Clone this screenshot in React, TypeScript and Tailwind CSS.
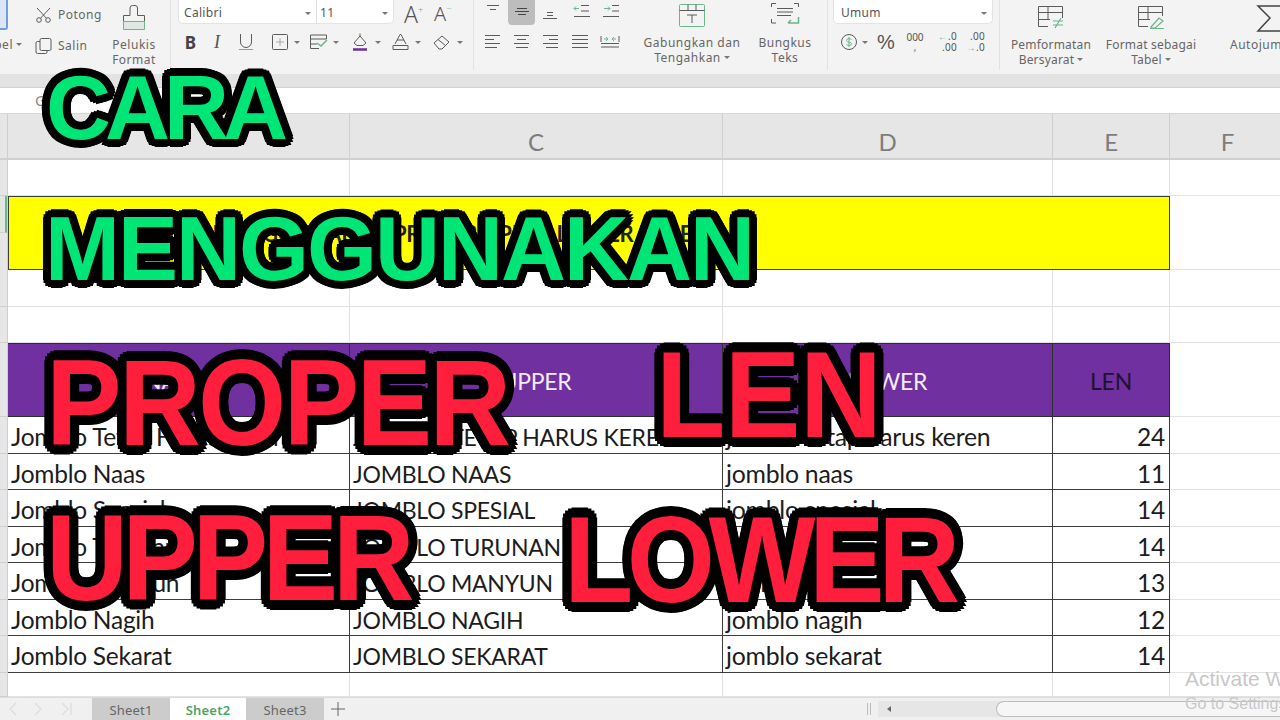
import React from "react";

const S = "#5b5b5b";
const G = "#6db58a";

function Caret() {
  return <span className="inline-block w-0 h-0 shrink-0 border-l-[3px] border-r-[3px] border-t-[3px] border-l-transparent border-r-transparent border-t-[#777777]" />;
}

function Ico({ w = 18, h = 18, children, className = "" }: { w?: number; h?: number; children: React.ReactNode; className?: string }) {
  return (
    <svg width={w} height={h} viewBox={`0 0 ${w} ${h}`} fill="none" stroke={S} strokeWidth={1} className={className}>
      {children}
    </svg>
  );
}

function Lines({ rows }: { rows: [number, number][] }) {
  return (
    <Ico w={18} h={16}>
      {rows.map(([a, b], i) => (
        <path key={i} d={`M${a} ${2.5 + i * 4}H${b}`} />
      ))}
    </Ico>
  );
}

function Label({ a, b, caret, tight }: { a: string; b?: string; caret?: boolean; tight?: boolean }) {
  return (
    <div className={`text-[12px] leading-[15px] ${tight ? "tracking-[0.2px]" : "tracking-[0.5px]"} text-[#666666] text-center whitespace-nowrap`}>
      <div>{a}</div>
      {b && (
        <div className="flex items-center justify-center gap-[3px]">
          {b}
          {caret && <Caret />}
        </div>
      )}
    </div>
  );
}

function Sep() {
  return <div className="w-px h-[70px] bg-[#e2e2e2] shrink-0" />;
}

function LargeTool({ w, t = "h-[37px]", icon, a, b, caret, tight }: { w: string; t?: string; icon: React.ReactNode; a: string; b?: string; caret?: boolean; tight?: boolean }) {
  return (
    <div className={`${w} shrink-0 flex flex-col items-center`}>
      <div className={`${t} flex items-start pt-[1px]`}>{icon}</div>
      <Label a={a} b={b} caret={caret} tight={tight} />
    </div>
  );
}

function Ribbon() {
  return (
    <div className="h-[74px] bg-[#f3f3f3] flex shrink-0 overflow-hidden">
      {/* clipboard */}
      <div className="w-[170px] shrink-0 flex">
        <div className="w-[34px] shrink-0 flex flex-col">
          <div className="h-[30px] overflow-hidden">
            <div className="w-[8px] h-[30px] rounded-br-[3px] border-r-2 border-b-2 border-[#6f9fe0] bg-[#dbe7f8]" />
          </div>
          <div className="w-[22px] overflow-hidden flex justify-end items-center gap-[3px] mt-[7px] text-[12px] leading-[15px] tracking-[0.5px] text-[#666666] whitespace-nowrap">
            Tempel
            <Caret />
          </div>
        </div>
        <div className="w-[72px] shrink-0 flex flex-col pt-[6px] gap-[11px] text-[12px] tracking-[0.5px] text-[#666666]">
          <div className="flex items-center gap-[6px] h-[18px]">
            <Ico>
              <circle cx="5" cy="14" r="2.3" />
              <circle cx="14" cy="14" r="2.3" />
              <path d="M6.500 12.300 16 2M12.500 12.300 3 2" />
            </Ico>
            Potong
          </div>
          <div className="flex items-center gap-[6px] h-[18px] mt-[2px]">
            <Ico>
              <rect x="6" y="1.500" width="11" height="12" rx="1.500" />
              <path d="M6 4.500H3.500A1.500 1.500 0 0 0 2 6V15A1.500 1.500 0 0 0 3.500 16.500H11.500A1.500 1.500 0 0 0 13 15V13.500" />
            </Ico>
            Salin
          </div>
        </div>
        <LargeTool
          w="w-[56px]"
          a="Pelukis"
          b="Format"
          icon={
            <Ico w={24} h={30} className="mt-[1px]">
              <path d="M1.500 19.500V13.500H8V6A2.500 2.500 0 0 1 10.500 3.500H13A2.500 2.500 0 0 1 15.500 6V13.500H22.500V19.500Z" />
              <path d="M1.500 19.500H22.500V27.500H1.500Z" fill="#dfe9e3" stroke={G} />
            </Ico>
          }
        />
      </div>
      <Sep />
      {/* font */}
      <div className="w-[302px] shrink-0 flex flex-col pl-[7px]">
        <div className="h-[24px] flex items-center">
          <div className="w-[216px] h-[24px] bg-white rounded-b-[5px] border-b border-x border-[#e3e3e3] flex items-center text-[12px] tracking-[0.3px] text-[#555555]">
            <div className="w-[138px] h-full flex items-center justify-between pt-[3px] pl-[5px] pr-[5px] border-r border-[#dddddd]">
              Calibri
              <Caret />
            </div>
            <div className="flex-1 h-full flex items-center justify-between pt-[3px] pl-[3px] pr-[5px]">
              11
              <Caret />
            </div>
          </div>
          <div className="ml-[10px] w-[30px] pt-[3px] text-[23px] leading-[24px] text-[#555555] font-light whitespace-nowrap">
            A<span className="text-[9px] leading-none text-[#6db58a] align-[10px]">+</span>
          </div>
          <div className="pt-[3px] text-[20px] leading-[24px] text-[#555555] font-light whitespace-nowrap">
            A<span className="text-[9px] leading-none text-[#6db58a] align-[9px]">−</span>
          </div>
        </div>
        <div className="h-[36px] flex items-center text-[#444444]">
          <span className="w-[25px] font-bold text-[17px] leading-none text-center">B</span>
          <span className="w-[28px] text-[18px] leading-none text-center italic font-['Liberation_Serif',serif] text-[#555555]">I</span>
          <div className="w-[30px] flex justify-center">
            <Ico w={16} h={18}>
              <path d="M2.500 1V9A5.500 5.500 0 0 0 13.500 9V1" />
              <path d="M1 16.500H15" stroke={G} />
            </Ico>
          </div>
          <div className="w-[39px] flex items-center gap-[5px] justify-end">
            <Ico w={18} h={18}>
              <rect x="1.500" y="1.500" width="15" height="15" rx="1" />
              <path d="M9 5V13M5 9H13" stroke="#a8a8a8" />
            </Ico>
            <Caret />
          </div>
          <div className="w-[39px] flex items-center gap-[5px] justify-end">
            <Ico w={19} h={18}>
              <path d="M1.500 2H17.500V6H1.500ZM1.500 6V15.500H10M1.500 11H8" />
              <path d="M8 10 12 13 18 7" stroke={G} strokeWidth={1.500} />
            </Ico>
            <Caret />
          </div>
          <div className="w-[42px] flex items-center gap-[5px] justify-end">
            <Ico w={19} h={20}>
              <path d="M3 11 9 4 15 11 12 13.500H6Z" />
              <path d="M9 1.500V4" />
              <path d="M2 17.500H16" stroke="#6b2fa5" strokeWidth={2.500} />
            </Ico>
            <Caret />
          </div>
          <div className="w-[40px] flex items-center gap-[5px] justify-end">
            <Ico w={19} h={20}>
              <path d="M4 12 9 2.500H10L15 12" />
              <path d="M6 8H13" />
              <path d="M2 13.500H17V17.500H2Z" />
            </Ico>
            <Caret />
          </div>
          <div className="w-[42px] flex items-center gap-[5px] justify-end">
            <Ico w={20} h={18}>
              <path d="M2 10 10 3 17 9 10 16H7Z" />
              <path d="M6 6.500 13.500 12.500" />
            </Ico>
            <Caret />
          </div>
        </div>
      </div>
      <Sep />
      {/* align */}
      <div className="w-[158px] shrink-0 flex flex-col pl-[10px]">
        <div className="h-[25px] flex items-start gap-[11px]">
          <div className="pt-[3px]">
            <Lines rows={[[3, 15], [6, 12]]} />
          </div>
          <div className="w-[27px] h-[25px] -mx-[5px] rounded-b-[4px] bg-[#bdbdbd] flex justify-center pt-[5px]">
            <Ico w={18} h={12}>
              <path d="M4 3.500H14M2 6.500H16M5 9.500H13" stroke="#444444" />
            </Ico>
          </div>
          <div className="pt-[10px]">
            <Ico w={18} h={10}>
              <path d="M6 2.500H12M6 5.500H12M2 8.500H16" />
            </Ico>
          </div>
          <div className="ml-[3px] pt-[2px]">
            <Ico w={18} h={18}>
              <path d="M8 3.500H16M8 9H16M1 14.500H17" />
              <path d="M6 6.500H1M3 4.500 1 6.500 3 8.500" stroke={G} />
            </Ico>
          </div>
          <div className="pt-[2px]">
            <Ico w={18} h={18}>
              <path d="M10 3.500H17M10 9H17M1 14.500H17" />
              <path d="M2 6.500H8M6 4.500 8 6.500 6 8.500" stroke={G} />
            </Ico>
          </div>
        </div>
        <div className="mt-[8px] flex gap-[11px]">
          <Lines rows={[[1, 16], [1, 10], [1, 16], [1, 13]]} />
          <Lines rows={[[1, 16], [4, 13], [1, 16], [3, 15]]} />
          <Lines rows={[[1, 16], [7, 16], [1, 16], [4, 16]]} />
          <Lines rows={[[1, 17], [1, 17], [1, 17], [1, 17]]} />
          <Ico w={20} h={16}>
            <path d="M1 3V9M19 3V9" />
            <path d="M4 6H8M6 4 8 6 6 8M16 6H12M14 4 12 6 14 8" stroke={G} />
            <path d="M1 10.500H19M1 14H19" />
          </Ico>
        </div>
      </div>
      {/* merge, wrap */}
      <div className="w-[195px] shrink-0 flex">
        <LargeTool
          w="w-[120px]"
          t="h-[35px]"
          a="Gabungkan dan"
          b="Tengahkan"
          caret
          icon={
            <Ico w={28} h={26}>
              <rect x="1.500" y="3.500" width="25" height="22" rx="1" stroke={G} />
              <path d="M1.500 9.500H26.500M10 3.500V9.500M18 3.500V9.500" />
              <path d="M9 14H19M14 14V22" />
            </Ico>
          }
        />
        <LargeTool
          w="w-[66px]"
          t="h-[35px]"
          a="Bungkus"
          b="Teks"
          icon={
            <Ico w={30} h={26}>
              <path d="M1.500 6V2.500H6M24 2.500H28.500V6M1.500 18V22H6" />
              <path d="M7 7.500H23M7 11H23M7 14.500H21" />
              <path d="M28.500 16V22H18M21 19 18 22" stroke={G} strokeWidth={1.500} />
            </Ico>
          }
        />
      </div>
      <Sep />
      {/* number */}
      <div className="w-[171px] shrink-0 flex flex-col pl-[5px]">
        <div className="w-[160px] h-[24px] bg-white rounded-b-[5px] border-b border-x border-[#e3e3e3] flex items-center justify-between pt-[3px] pl-[7px] pr-[5px] text-[12px] tracking-[0.3px] text-[#555555]">
          Umum
          <Caret />
        </div>
        <div className="h-[36px] flex items-center text-[#555555]">
          <div className="w-[41px] pl-[7px] flex items-center gap-[4px]">
            <svg width="18" height="18" viewBox="0 0 18 18" fill="none" stroke={S}>
              <circle cx="9" cy="9" r="7.500" />
              <path d="M11.500 6.500C10 5 6.500 5.500 6.500 7.500 6.500 10 11.500 8.500 11.500 10.800 11.500 12.800 8 13 6.500 11.500M9 4V14" stroke={G} />
            </svg>
            <Caret />
          </div>
          <span className="w-[24px] text-[20px] leading-none text-center font-['Liberation_Sans',sans-serif]">%</span>
          <div className="w-[34px] flex flex-col items-center text-[10px] leading-[10px]">
            <span>000</span>
            <span className="text-[#6db58a] font-bold">,</span>
          </div>
          <div className="w-[25px] text-[10px] leading-[11px] text-right tracking-[0.3px] whitespace-nowrap">
            <div>
              <span className="text-[#6db58a]">←</span>.0
            </div>
            <div>.00</div>
          </div>
          <div className="w-[28px] text-[10px] leading-[11px] text-right tracking-[0.3px] whitespace-nowrap">
            <div>.00</div>
            <div>
              <span className="text-[#6db58a]">→</span>.0
            </div>
          </div>
        </div>
      </div>
      <Sep />
      {/* styles */}
      <div className="w-[212px] shrink-0 flex">
        <LargeTool
          w="w-[102px]"
          tight
          a="Pemformatan"
          b="Bersyarat"
          caret
          icon={
            <Ico w={28} h={26} className="mt-[2px]">
              <path d="M1.500 23.500V3.500H25.500V15M1.500 9.500H25.500M1.500 16.500H13M11 3.500V16M1.500 23.500H11" />
              <path d="M16 18H26M16 22H26M24 15 18 25" stroke={G} strokeWidth={1.200} />
            </Ico>
          }
        />
        <LargeTool
          w="w-[98px]"
          tight
          a="Format sebagai"
          b="Tabel"
          caret
          icon={
            <Ico w={28} h={26} className="mt-[2px]">
              <path d="M1.500 23.500V3.500H25.500V13M1.500 9.500H25.500M1.500 16.500H13M11 3.500V16M1.500 23.500H11" />
              <path d="M14 24 22 15 26 18 18 25H14ZM13 25.500H27" stroke={G} strokeWidth={1.200} />
            </Ico>
          }
        />
      </div>
      <div className="w-[68px] shrink-0 flex flex-col items-start pl-[18px]">
        <div className="h-[37px] pl-[26px] flex items-start pt-[3px]">
          <svg width="30" height="30" viewBox="0 0 30 30" fill="none" stroke="#444444" strokeWidth={1.500} className="shrink-0">
            <path d="M26 3H2L14 15 2 28H26" />
          </svg>
        </div>
        <div className="text-[12px] leading-[15px] tracking-[0.5px] text-[#666666] whitespace-nowrap">Autojumlah</div>
      </div>
    </div>
  );
}

const LIGHT = "border-r border-b border-[#e2e2e2]";
const COLS = "grid grid-cols-[8px_342px_373px_330px_117px_1fr]";

function Blank({ h }: { h: string }) {
  return (
    <div className={`${h} ${COLS} shrink-0`}>
      <div className="bg-[#e6e6e6] border-r border-b border-[#cfcfcf]" />
      <div className={LIGHT} />
      <div className={LIGHT} />
      <div className={LIGHT} />
      <div className={LIGHT} />
      <div className="border-b border-[#e2e2e2]" />
    </div>
  );
}

const DATA: [string, string, string, number][] = [
  ["Jomblo Tetap Harus Keren", "JOMBLO TETAP HARUS KEREN", "jomblo tetap harus keren", 24],
  ["Jomblo Naas", "JOMBLO NAAS", "jomblo naas", 11],
  ["Jomblo Spesial", "JOMBLO SPESIAL", "jomblo spesial", 14],
  ["Jomblo Turunan", "JOMBLO TURUNAN", "jomblo turunan", 14],
  ["Jomblo Manyun", "JOMBLO MANYUN", "jomblo manyun", 13],
  ["Jomblo Nagih", "JOMBLO NAGIH", "jomblo nagih", 12],
  ["Jomblo Sekarat", "JOMBLO SEKARAT", "jomblo sekarat", 14],
];

const CELL = "border-r border-b border-[#3c3c3c] flex items-center pl-[3px] pt-[5px] whitespace-nowrap overflow-hidden";

function Sheet() {
  return (
    <div className="flex-1 flex flex-col overflow-hidden font-['Lato',sans-serif] text-[23px] tracking-[-0.25px] text-[#1c1c1c]">
      <div className={`h-[46px] bg-[#e6e6e6] border-b-2 border-[#cfcfcf] shrink-0 ${COLS} text-[24px] text-[#7d7d7d] font-normal`}>
        <div className="border-r border-[#cfcfcf]" />
        {["", "C", "D", "E", "F"].map((c, i) => (
          <div key={i} className={`flex items-center justify-center pt-[10px] ${i < 4 ? "border-r border-[#cfcfcf]" : ""}`}>
            <span className={i === 4 ? "ml-[5px]" : ""}>{c}</span>
          </div>
        ))}
      </div>
      <Blank h="h-[36px]" />
      <div className="h-[74px] grid grid-cols-[8px_1162px_1fr] shrink-0">
        <div className="bg-[#e6e6e6] border-r border-[#cfcfcf]">
          <div className="h-[37px] bg-[#dfe7df] border-r-2 border-b border-r-[#6db58a] border-b-[#cfcfcf]" />
        </div>
        <div className="bg-[#ffff00] border border-[#3c3c3c] flex items-center pl-[120px] font-bold text-[22px] text-[#222222] whitespace-nowrap overflow-hidden">
          RUMUS MENGGUNAKAN PROPER UPPER LOWER KEREN
        </div>
        <div className="border-b border-[#e2e2e2]" />
      </div>
      <Blank h="h-[37px]" />
      <Blank h="h-[36px]" />
      <div className={`h-[74px] ${COLS} shrink-0`}>
        <div className="bg-[#e6e6e6] border-r border-b border-[#cfcfcf]" />
        <div className="bg-[#7030a0] border-r border-y border-[#2e2e2e] flex items-center justify-center pt-[2px] text-[#f4ecfa]">NAMA</div>
        <div className="bg-[#7030a0] border-r border-y border-[#2e2e2e] flex items-center justify-center pt-[2px] text-[#f4ecfa]">UPPER</div>
        <div className="bg-[#7030a0] border-r border-y border-[#2e2e2e] flex items-center justify-center pt-[2px] text-[#f4ecfa]">LOWER</div>
        <div className="bg-[#7030a0] border-r border-y border-[#2e2e2e] flex items-center justify-center pt-[2px] text-[#1e1233]">LEN</div>
        <div className="border-b border-[#e2e2e2]" />
      </div>
      {DATA.map((r) => (
        <div key={r[0]} className={`h-[36.5px] ${COLS} shrink-0 leading-[30px]`}>
          <div className="bg-[#e6e6e6] border-r border-b border-[#cfcfcf]" />
          <div className={`${CELL} text-[24.5px]`}>{r[0]}</div>
          <div className={`${CELL} text-[23px]`}>{r[1]}</div>
          <div className={`${CELL} text-[24.8px]`}>{r[2]}</div>
          <div className={`${CELL} justify-end pr-[4px] text-[24.5px]`}>{r[3]}</div>
          <div className="border-b border-[#e2e2e2]" />
        </div>
      ))}
      <Blank h="h-[24px]" />
    </div>
  );
}

function Tabs() {
  return (
    <div className="h-[23px] bg-[#f0f0f0] border-t border-[#dcdcdc] flex shrink-0 items-stretch text-[13px] text-[#666666] font-['Noto_Sans',sans-serif] tracking-[0.2px]">
      <div className="w-[92px] flex items-center pl-[6px]">
        <svg width="70" height="14" viewBox="0 0 70 14" fill="none" stroke="#dcdcdc" strokeWidth={1.200}>
          <path d="M10 1 4 7 10 13M29 1 35 7 29 13M56 1 62 7 56 13M65 1V13" />
        </svg>
      </div>
      <div className="w-[78px] bg-[#cccccc] flex items-center justify-center pt-[3px]">Sheet1</div>
      <div className="w-[76px] bg-white flex items-center justify-center pt-[3px] text-[#4fa564] font-semibold">Sheet2</div>
      <div className="w-[78px] bg-[#cccccc] flex items-center justify-center pt-[3px]">Sheet3</div>
      <div className="w-[28px] flex items-center justify-center">
        <svg width="14" height="14" viewBox="0 0 14 14" stroke="#666666">
          <path d="M7 0V14M0 7H14" />
        </svg>
      </div>
      <div className="w-[526px] flex items-center justify-end">
        <div className="w-[4px] h-[12px] border-x border-[#bdbdbd] mr-[7px]" />
      </div>
      <div className="flex-1 flex items-center bg-[#e6e6e6] my-[3px]">
        <span className="w-0 h-0 shrink-0 ml-[9px] border-y-[3px] border-r-[4px] border-y-transparent border-r-[#666666]" />
        <div className="flex-1 h-[16px] ml-[105px] bg-[#f6f6f6] border border-[#bdbdbd] border-r-0 rounded-l-[8px]" />
      </div>
    </div>
  );
}

const OUT = "absolute whitespace-nowrap font-bold font-['Liberation_Sans',sans-serif] leading-none";
const GREEN = "text-[90px] text-[#00e676] [text-shadow:8px_0_0.6px_#000,7.4px_3.1px_0.6px_#000,5.7px_5.7px_0.6px_#000,3.1px_7.4px_0.6px_#000,0_8px_0.6px_#000,-3.1px_7.4px_0.6px_#000,-5.7px_5.7px_0.6px_#000,-7.4px_3.1px_0.6px_#000,-8px_0_0.6px_#000,-7.4px_-3.1px_0.6px_#000,-5.7px_-5.7px_0.6px_#000,-3.1px_-7.4px_0.6px_#000,0_-8px_0.6px_#000,3.1px_-7.4px_0.6px_#000,5.7px_-5.7px_0.6px_#000,7.4px_-3.1px_0.6px_#000]";
const RED = "text-[122px] text-[#ff1f3d] origin-top-left scale-x-[0.93] [text-shadow:10px_0_0.6px_#000,9.2px_3.8px_0.6px_#000,7.1px_7.1px_0.6px_#000,3.8px_9.2px_0.6px_#000,0_10px_0.6px_#000,-3.8px_9.2px_0.6px_#000,-7.1px_7.1px_0.6px_#000,-9.2px_3.8px_0.6px_#000,-10px_0_0.6px_#000,-9.2px_-3.8px_0.6px_#000,-7.1px_-7.1px_0.6px_#000,-3.8px_-9.2px_0.6px_#000,0_-10px_0.6px_#000,3.8px_-9.2px_0.6px_#000,7.1px_-7.1px_0.6px_#000,9.2px_-3.8px_0.6px_#000]";

export default function App() {
  return (
    <div className="relative w-[1280px] h-[720px] overflow-hidden bg-white flex flex-col font-['Noto_Sans',sans-serif]">
      <Ribbon />
      <div className="h-[14px] bg-[#e3e3e3] border-b border-[#d2d2d2] shrink-0" />
      <div className="h-[26px] bg-white border-b border-[#d8d8d8] shrink-0 flex items-center text-[15px] text-[#8a8a8a]">
        <span className="ml-[35px] w-[185px]">G</span>
        <span className="italic font-['Liberation_Serif',serif]">fx</span>
      </div>
      <Sheet />
      <Tabs />

      <div className="absolute left-[1185px] top-[668px] text-[21px] leading-none whitespace-nowrap text-[#c8c8c8] font-['Liberation_Sans',sans-serif]">Activate W</div>
      <div className="absolute left-[1185px] top-[696px] text-[16px] leading-none whitespace-nowrap text-[#c8c8c8] font-['Liberation_Sans',sans-serif]">Go to Settings</div>

      <div className={`${OUT} ${GREEN} left-[46px] top-[63px] tracking-[-6px]`}>CARA</div>
      <div className={`${OUT} ${GREEN} left-[45px] top-[204px] tracking-[-2px]`}>MENGGUNAKAN</div>
      <div className={`${OUT} ${RED} left-[46px] top-[342px] tracking-[-3px]`}>PROPER</div>
      <div className={`${OUT} ${RED} left-[656px] top-[334px] tracking-[-0.5px]`}>LEN</div>
      <div className={`${OUT} ${RED} left-[46px] top-[497px] tracking-[-6px]`}>UPPER</div>
      <div className={`${OUT} ${RED} left-[564px] top-[499px] tracking-[-7px]`}>LOWER</div>
    </div>
  );
}
